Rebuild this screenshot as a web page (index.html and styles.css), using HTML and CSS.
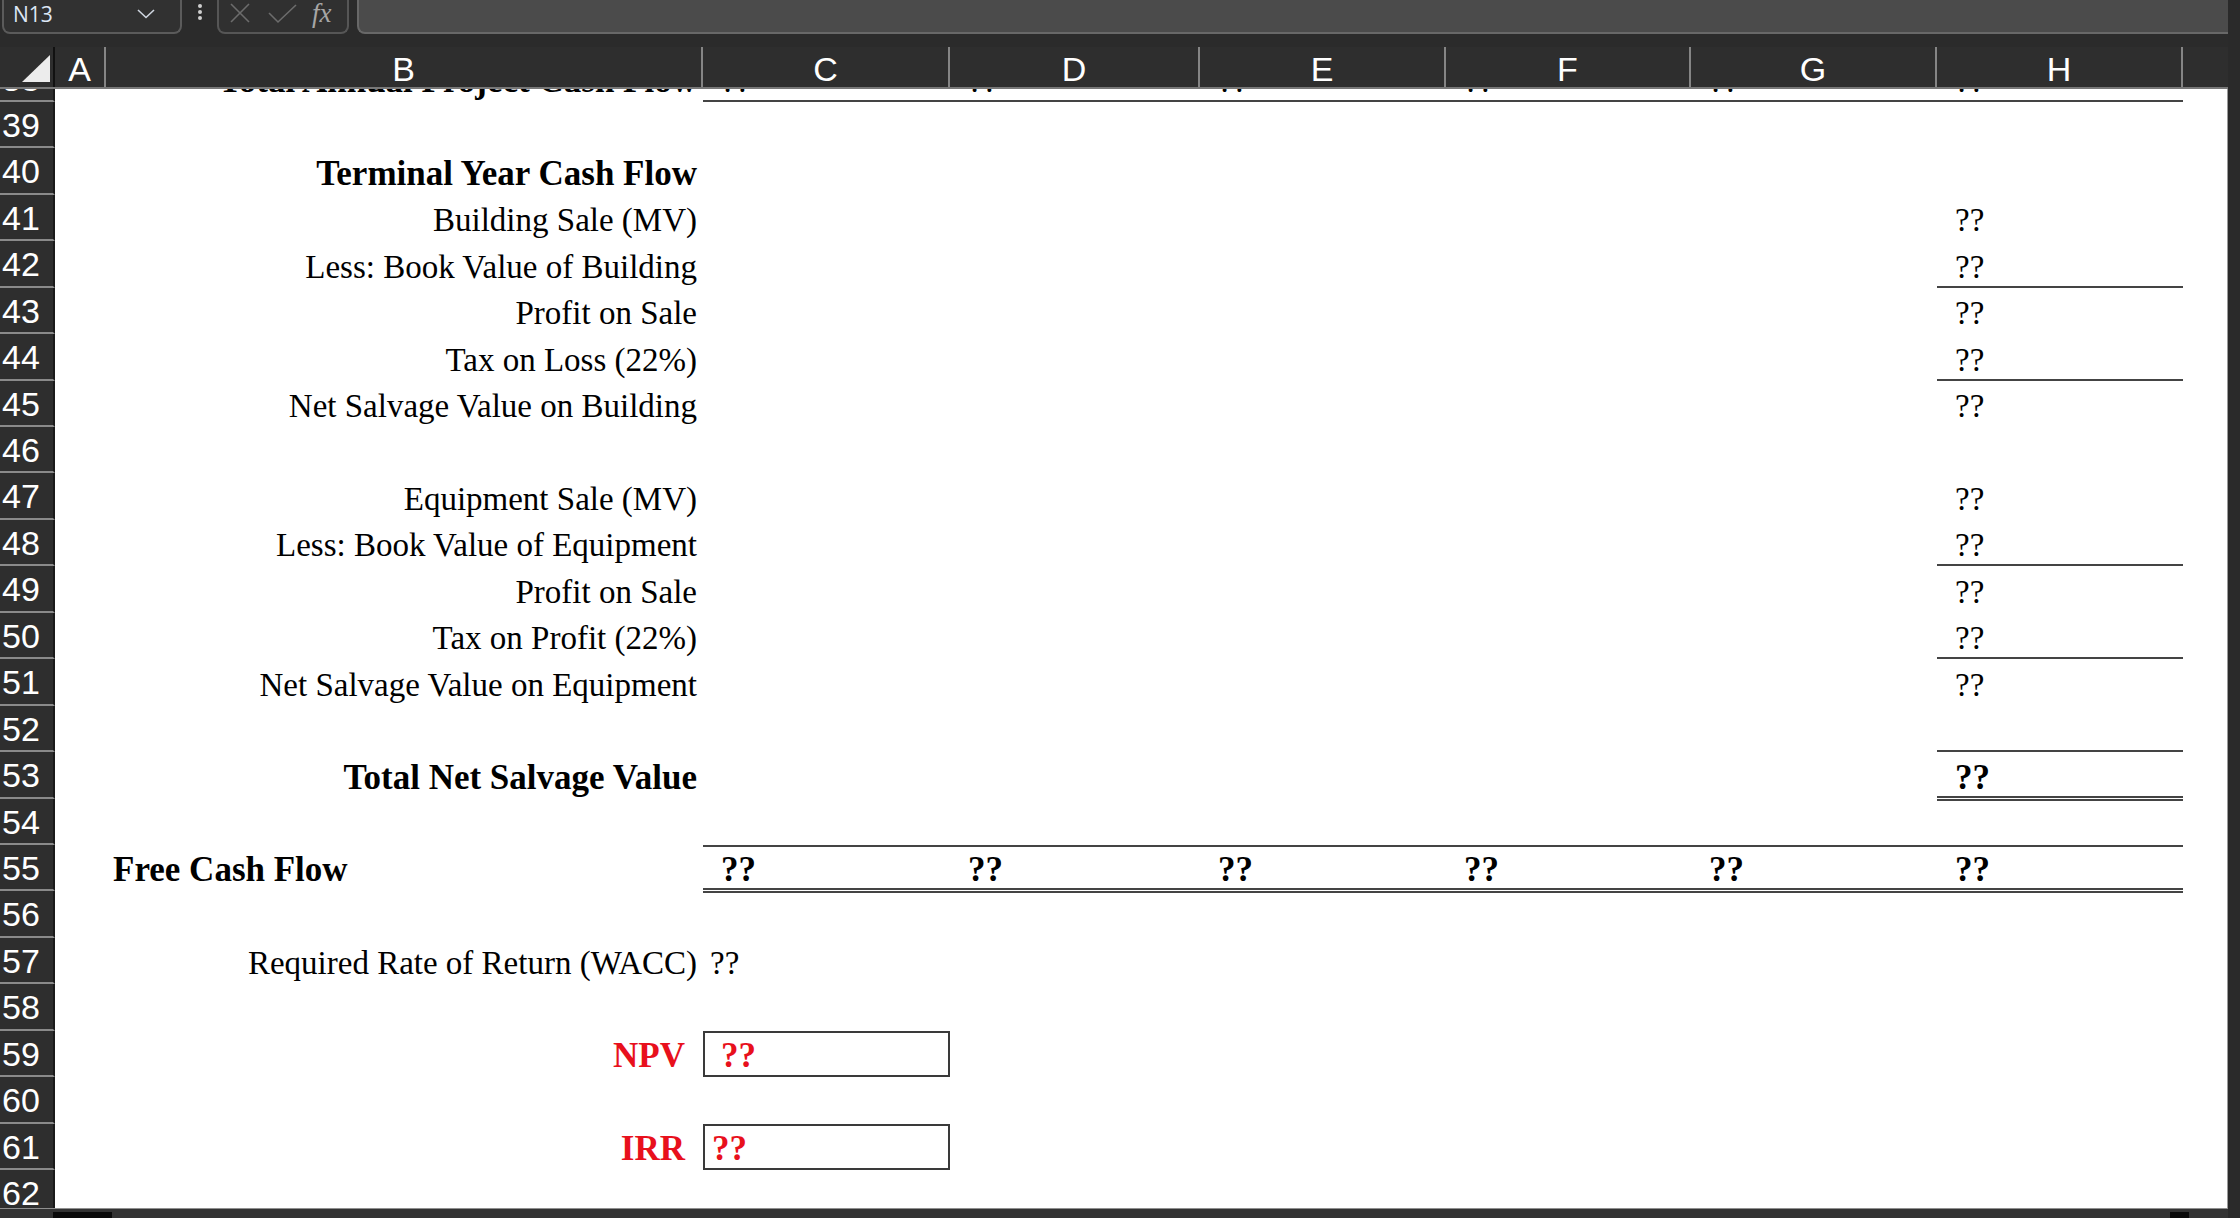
FILE: index.html
```html
<!DOCTYPE html>
<html>
<head>
<meta charset="utf-8">
<link rel="stylesheet" href="styles.css">
</head>
<body>
<div class="app">
  <div class="main">
    <div class="fbar">
      <div class="namebox"><span>N13</span>
        <svg class="chev" width="18" height="10" viewBox="0 0 18 10"><polyline points="1,1 9,8.5 17,1" fill="none" stroke="#cfd6e0" stroke-width="1.6"/></svg>
      </div>
      <div class="kebab"><i></i><i></i><i></i></div>
      <div class="fbtns">
        <svg class="ix" width="20" height="20" viewBox="0 0 20 20"><path d="M1 1 L19 19 M19 1 L1 19" stroke="#6c6c6c" stroke-width="1.6" fill="none"/></svg>
        <svg class="ick" width="29" height="20" viewBox="0 0 29 20"><polyline points="1,9 10,18 28,1" fill="none" stroke="#6c6c6c" stroke-width="1.6"/></svg>
        <span class="fx">fx</span>
      </div>
      <div class="finput"></div>
    </div>

    <div class="colhdr">
      <div class="corner"><svg width="28" height="27" viewBox="0 0 28 27"><polygon points="28,0 28,27 0,27" fill="#ececec"/></svg></div>
      <div class="h">A</div>
      <div class="h">B</div>
      <div class="h">C</div>
      <div class="h">D</div>
      <div class="h">E</div>
      <div class="h">F</div>
      <div class="h">G</div>
      <div class="h">H</div>
      <div class="h hlast"></div>
    </div>

    <div class="viewport">
      <div class="rows">
        <div class="row"><div class="rh">38</div><div class="c cB b">Total Annual Project Cash Flow</div><div class="c cC bb">??</div><div class="c cD bb">??</div><div class="c cE bb">??</div><div class="c cF bb">??</div><div class="c cG bb">??</div><div class="c cH bb">??</div></div>
        <div class="row"><div class="rh">39</div></div>
        <div class="row"><div class="rh">40</div><div class="c cB b">Terminal Year Cash Flow</div></div>
        <div class="row"><div class="rh">41</div><div class="c cB">Building Sale (MV)</div><div class="c cH">??</div></div>
        <div class="row"><div class="rh">42</div><div class="c cB">Less: Book Value of Building</div><div class="c cH bb">??</div></div>
        <div class="row"><div class="rh">43</div><div class="c cB">Profit on Sale</div><div class="c cH">??</div></div>
        <div class="row"><div class="rh">44</div><div class="c cB">Tax on Loss (22%)</div><div class="c cH bb">??</div></div>
        <div class="row"><div class="rh">45</div><div class="c cB">Net Salvage Value on Building</div><div class="c cH">??</div></div>
        <div class="row"><div class="rh">46</div></div>
        <div class="row"><div class="rh">47</div><div class="c cB">Equipment Sale (MV)</div><div class="c cH">??</div></div>
        <div class="row"><div class="rh">48</div><div class="c cB">Less: Book Value of Equipment</div><div class="c cH bb">??</div></div>
        <div class="row"><div class="rh">49</div><div class="c cB">Profit on Sale</div><div class="c cH">??</div></div>
        <div class="row"><div class="rh">50</div><div class="c cB">Tax on Profit (22%)</div><div class="c cH bb">??</div></div>
        <div class="row"><div class="rh">51</div><div class="c cB">Net Salvage Value on Equipment</div><div class="c cH">??</div></div>
        <div class="row"><div class="rh">52</div><div class="c cH bb"></div></div>
        <div class="row"><div class="rh">53</div><div class="c cB b">Total Net Salvage Value</div><div class="c cH b bbd">??</div></div>
        <div class="row"><div class="rh">54</div></div>
        <div class="row"><div class="rh">55</div><div class="c cB b left">Free Cash Flow</div><div class="c cC b bt bbd">??</div><div class="c cD b bt bbd">??</div><div class="c cE b bt bbd">??</div><div class="c cF b bt bbd">??</div><div class="c cG b bt bbd">??</div><div class="c cH b bt bbd">??</div></div>
        <div class="row"><div class="rh">56</div></div>
        <div class="row"><div class="rh">57</div><div class="c cB">Required Rate of Return (WACC)</div><div class="c cC tight">??</div></div>
        <div class="row"><div class="rh">58</div></div>
        <div class="row"><div class="rh">59</div><div class="c cB b red np">NPV</div><div class="c cC box b red">??</div></div>
        <div class="row"><div class="rh">60</div></div>
        <div class="row"><div class="rh">61</div><div class="c cB b red np">IRR</div><div class="c cC box b red tight2">??</div></div>
        <div class="row"><div class="rh">62</div></div>
      </div>
    </div>

    <div class="bstrip"><span class="bk1"></span><span class="bk2"></span></div>
  </div>
  <div class="vscroll"></div>
</div>
</body>
</html>
```

FILE: styles.css
```css
* { box-sizing: border-box; }
html, body { margin: 0; padding: 0; }
body {
  width: 2240px;
  height: 1218px;
  overflow: hidden;
  background: #2b2b2b;
  font-family: "Liberation Sans", Arial, sans-serif;
  --cols: 55px 51px 597px 247px 250px 246px 245px 246px 246px 1fr;
}
.app { display: flex; height: 1218px; }
.main { width: 2228px; display: flex; flex-direction: column; }
.vscroll { flex: 1; background: #2a2a2a; }

/* formula bar */
.fbar {
  height: 47px;
  flex-shrink: 0;
  display: flex;
  align-items: flex-start;
  background: #2b2b2b;
}
.namebox {
  margin-left: 2px;
  width: 180px;
  height: 34px;
  border: 2px solid #5b5b5b;
  border-top: 0;
  border-radius: 0 0 8px 8px;
  background: #313131;
  display: flex;
  align-items: center;
  justify-content: space-between;
  padding: 0 25px 4px 9px;
  font-family: "Open Sans", "Noto Sans", sans-serif;
  font-size: 21px;
  color: #dce6f5;
}
.kebab {
  width: 35px;
  height: 34px;
  display: flex;
  flex-direction: column;
  align-items: center;
  padding-top: 4px;
  gap: 2px;
}
.kebab i { width: 4px; height: 4px; border-radius: 50%; background: #cfcfcf; }
.fbtns {
  width: 132px;
  height: 34px;
  border: 2px solid #565656;
  border-top: 0;
  border-radius: 0 0 8px 8px;
  background: #303030;
  display: flex;
  align-items: flex-start;
  padding: 3px 0 0 11px;
}
.ick { margin-left: 18px; margin-top: 1px; }
.fx {
  margin-left: 15px;
  margin-top: -5px;
  font-family: "Liberation Serif", "Times New Roman", serif;
  font-style: italic;
  font-size: 27px;
  color: #a6a6a6;
}
.finput {
  flex: 1;
  margin-left: 8px;
  height: 34px;
  background: #4b4b4b;
  border: 2px solid #686868;
  border-top: 0;
  border-right: 0;
  border-radius: 0 0 0 8px;
}

/* column header */
.colhdr {
  display: grid;
  grid-template-columns: var(--cols);
  height: 42px;
  flex-shrink: 0;
  background: #2e2e2e;
  border-bottom: 2px solid #787878;
}
.corner {
  border-right: 2px solid #111;
  padding: 8px 0 0 22px;
}
.corner svg { display: block; }
.h {
  border-right: 2px solid #858585;
  color: #fff;
  font-size: 34px;
  line-height: 36px;
  padding-top: 4px;
  text-align: center;
}
.hlast { border-right: 0; }

/* sheet body */
.viewport {
  height: 1119px;
  flex-shrink: 0;
  overflow: hidden;
  background: #fff;
  border-right: 1px solid #9a9a9a;
}
.rows { margin-top: -33.5px; }
.row {
  display: grid;
  grid-template-columns: var(--cols);
  height: 46.45px;
}
.rh {
  grid-column: 1;
  background: #2e2e2e;
  color: #fff;
  border-bottom: 2px solid #8a8a8a;
  border-right: 2px solid #1a1a1a;
  font-size: 34px;
  line-height: 46px;
  padding-left: 2px;
  overflow: hidden;
}
.c {
  display: flex;
  align-items: flex-end;
  padding-bottom: 3px;
  line-height: 36px;
  font-family: "Liberation Serif", "Times New Roman", serif;
  font-size: 33px;
  color: #000;
  white-space: nowrap;
}
.cB { grid-column: 3; justify-content: flex-end; padding-right: 6px; }
.cC { grid-column: 4; padding-left: 18px; }
.cD { grid-column: 5; padding-left: 18px; }
.cE { grid-column: 6; padding-left: 18px; }
.cF { grid-column: 7; padding-left: 18px; }
.cG { grid-column: 8; padding-left: 18px; }
.cH { grid-column: 9; padding-left: 18px; }
.b { font-weight: bold; font-size: 35px; }
.left { justify-content: flex-start; padding-left: 7px; padding-right: 0; }
.red { color: #e8101c; }
.np { padding-right: 18px; }
.tight { padding-left: 7px; }
.tight2 { padding-left: 9px; }
.box { box-shadow: inset 0 0 0 2px #3a3a3a; }
.bb { box-shadow: inset 0 -2px 0 #444; }
.bt { box-shadow: inset 0 2px 0 #444; }
.bbd {
  background: linear-gradient(#444, #444) left 0 bottom 1px / 100% 2px no-repeat;
  box-shadow: 0 2px 0 #444;
}
.bt.bbd { box-shadow: inset 0 2px 0 #444, 0 2px 0 #444; }

/* bottom strip */
.bstrip {
  height: 10px;
  flex-shrink: 0;
  background: #333;
  border-top: 1px solid #8f8f8f;
  display: flex;
  align-items: flex-end;
}
.bk1 { margin-left: 53px; width: 59px; height: 6px; background: #0a0a0a; }
.bk2 { margin-left: auto; margin-right: 39px; width: 19px; height: 6px; background: #0a0a0a; }
```
